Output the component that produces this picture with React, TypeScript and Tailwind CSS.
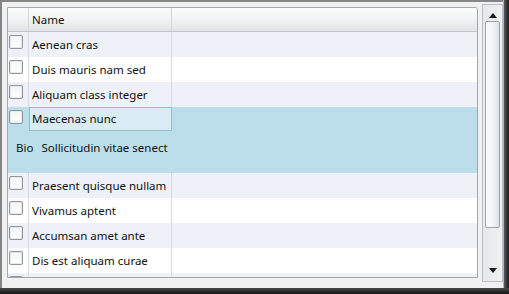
import React from "react";

const rows = [
  "Aenean cras",
  "Duis mauris nam sed",
  "Aliquam class integer",
  "__SEL__",
  "Praesent quisque nullam",
  "Vivamus aptent",
  "Accumsan amet ante",
  "Dis est aliquam curae",
  "",
];

function Check() {
  return (
    <div className="w-[14px] h-[14px] rounded-[2px] border border-[#8e969e] bg-gradient-to-b from-[#f4f5f6] to-[#ffffff] shadow-[inset_0_0_0_1px_#e6e9ec]" />
  );
}

function Row({ text, alt }: { text: string; alt: boolean }) {
  return (
    <div className={`flex h-[25px] shrink-0 ${alt ? "bg-[#eef1f7]" : "bg-white"}`}>
      <div className="w-[21px] border-r border-[#d6dadf] pl-[1px] pt-[3px] shrink-0">
        <Check />
      </div>
      <div className="w-[143px] border-r border-[#d6dadf] pl-[3px] flex items-center shrink-0 text-[11.5px] text-[#111] leading-none pt-[1px] whitespace-nowrap overflow-hidden">
        {text}
      </div>
      <div className="flex-1" />
    </div>
  );
}

export default function App() {
  return (
    <div className="w-[509px] h-[294px] flex flex-col bg-[#f1f1f1] overflow-hidden font-['Noto_Sans',sans-serif]">
      <div className="flex flex-1 min-h-0">
        <div className="w-[503px] flex border-t-2 border-l-2 border-[#858585]">
          {/* grid */}
          <div className="ml-[5px] mt-[5px] w-[471px] h-[271px] border border-[#a3a8ae] rounded-tr-[3px] bg-white flex flex-col overflow-hidden">
            {/* header */}
            <div className="flex h-[24px] shrink-0 border-b border-[#c2c6cb] bg-gradient-to-b from-[#fbfbfb] via-[#f2f3f4] to-[#e1e3e6]">
              <div className="w-[21px] border-r border-[#d2d5d9] shrink-0" />
              <div className="w-[143px] border-r border-[#d2d5d9] pl-[3px] flex items-center text-[11.5px] text-[#111] shrink-0 pt-[1px]">
                Name
              </div>
              <div className="flex-1" />
            </div>
            {rows.map((r, i) =>
              r === "__SEL__" ? (
                <div key={i} className="h-[66px] shrink-0 bg-[#bcdeea] flex flex-col">
                  <div className="flex h-[25px]">
                    <div className="w-[21px] pl-[1px] pt-[3px] shrink-0">
                      <Check />
                    </div>
                    <div className="w-[143px] h-[24px] border border-[#8ebfd2] bg-[#d9ecf3] pl-[2px] flex items-center text-[11.5px] text-[#111] shrink-0 whitespace-nowrap">
                      Maecenas nunc
                    </div>
                  </div>
                  <div className="flex items-center h-[31px] pl-[8px] text-[11.5px] text-[#111] gap-[8px] whitespace-nowrap">
                    <span>Bio</span>
                    <span>Sollicitudin vitae senect</span>
                  </div>
                </div>
              ) : (
                <Row key={i} text={r} alt={i % 2 === 0} />
              )
            )}
          </div>
          {/* scrollbar */}
          <div className="ml-[4px] mt-[2px] w-[21px] h-[278px] border border-[#b9bdc2] bg-gradient-to-r from-[#e6e8ea] to-[#eef0f2] flex flex-col items-center">
            <div className="h-[16px] w-full flex items-center justify-center pt-[4px]">
              <svg width="8" height="5" viewBox="0 0 8 5">
                <path d="M0 5 L4 0 L8 5 Z" fill="#1a1a1a" />
              </svg>
            </div>
            <div className="w-[15px] h-[207px] rounded-[2px] border border-[#9ea4aa] bg-gradient-to-r from-[#fbfbfb] via-[#f4f5f6] to-[#dfe2e5]" />
            <div className="flex-1" />
            <div className="h-[16px] w-full flex items-center justify-center pb-[6px]">
              <svg width="8" height="5" viewBox="0 0 8 5">
                <path d="M0 0 L8 0 L4 5 Z" fill="#1a1a1a" />
              </svg>
            </div>
          </div>
        </div>
        <div className="flex-1 flex">
          <div className="w-[1px] bg-[#9db8d8]" />
          <div className="flex-1 bg-gradient-to-r from-[#5a5a5a] to-[#1e1e1e]" />
        </div>
      </div>
      <div className="h-[6px] shrink-0 bg-gradient-to-b from-[#4a4a4a] to-[#141414]" />
    </div>
  );
}
